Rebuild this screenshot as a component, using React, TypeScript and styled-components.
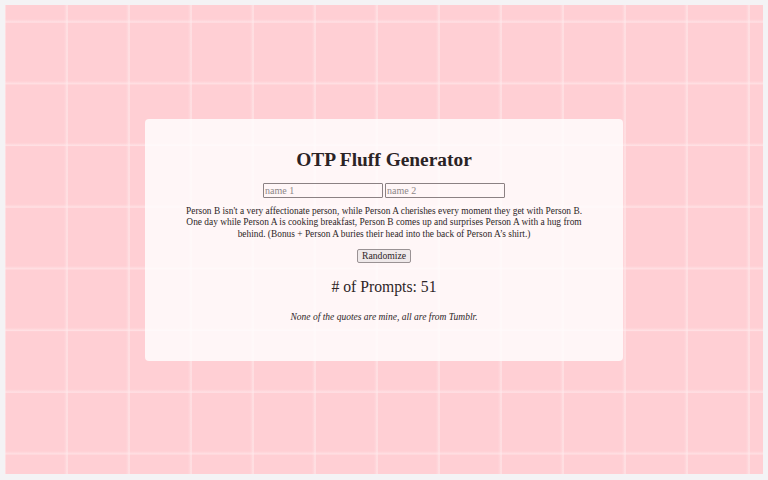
import React, { useState } from "react";
import styled, { createGlobalStyle } from "styled-components";

const GlobalStyle = createGlobalStyle`
    html, body {
        margin: 0;
        padding: 0;
        background: #f4f3f5;
    }
    body {
        font-family: "Liberation Serif", "Times New Roman", serif;
        color: #2e2628;
    }
`;

const prompt =
    "Person B isn't a very affectionate person, while Person A cherishes every moment they get with Person B. One day while Person A is cooking breakfast, Person B comes up and surprises Person A with a hug from behind. (Bonus + Person A buries their head into the back of Person A\u2019s shirt.)";

/**
 * OTP 生成器
 */
const App = () => {
    const [one, setOne] = useState("");
    const [two, setTwo] = useState("");

    return (
        <Page>
            <GlobalStyle />
            <Card>
                <Title>OTP Fluff Generator</Title>
                <Names>
                    <NameInput placeholder="name 1" value={one} onChange={e => setOne(e.target.value)} />
                    <NameInput placeholder="name 2" value={two} onChange={e => setTwo(e.target.value)} />
                </Names>
                <Prompt>{prompt}</Prompt>
                <RandomButton type="button">Randomize</RandomButton>
                <Count># of Prompts: 51</Count>
                <Credit>None of the quotes are mine, all are from Tumblr.</Credit>
            </Card>
        </Page>
    );
};

const Page = styled.div`
    box-sizing: border-box;
    margin: 5px;
    height: 469px;
    display: flex;
    align-items: center;
    justify-content: center;
    background-color: #ffcfd4;
    background-image:
        linear-gradient(90deg, transparent 58px, rgba(255, 232, 235, 0.25) 59.5px, rgba(255, 238, 240, 0.62) 61px, rgba(255, 232, 235, 0.25) 62.5px, transparent 64px),
        linear-gradient(180deg, transparent 58px, rgba(255, 232, 235, 0.25) 59.5px, rgba(255, 238, 240, 0.62) 61px, rgba(255, 232, 235, 0.25) 62.5px, transparent 64px);
    background-size: 62px 62px, 62px 61.7px;
    background-position: 1px 0, 0 -44px;
`;

const Card = styled.div`
    box-sizing: border-box;
    width: 478px;
    height: 242px;
    padding: 29px 36px 0;
    border-radius: 4px;
    background: rgba(255, 255, 255, 0.8);
    display: flex;
    flex-direction: column;
    align-items: center;
    text-align: center;
`;

const Title = styled.h2`
    margin: 0;
    font-size: 19.4px;
    line-height: 24px;
    font-weight: 700;
    color: #2b2325;
`;

const Names = styled.div`
    display: flex;
    gap: 2px;
    margin-top: 11px;
`;

const NameInput = styled.input`
    box-sizing: border-box;
    width: 120px;
    height: 15px;
    padding: 0 1px;
    border: 1px solid #8b8183;
    border-radius: 1px;
    background: transparent;
    font-family: inherit;
    font-size: 10px;
    color: #2e2628;
    outline: none;
    &::placeholder {
        color: #8e8888;
    }
`;

const Prompt = styled.p`
    margin: 8px 0 0;
    max-width: 404px;
    font-size: 9.4px;
    line-height: 11.8px;
`;

const RandomButton = styled.button`
    box-sizing: border-box;
    margin-top: 8px;
    height: 14px;
    padding: 0 4px;
    border: 1px solid #9a9294;
    border-radius: 2px;
    background: #efe9ea;
    font-family: inherit;
    font-size: 9.7px;
    line-height: 12px;
    color: #2e2628;
`;

const Count = styled.div`
    margin-top: 15px;
    font-size: 15.7px;
    line-height: 18px;
`;

const Credit = styled.p`
    margin: 15px 0 0;
    font-size: 9.5px;
    line-height: 12px;
    font-style: italic;
`;

export default App;
